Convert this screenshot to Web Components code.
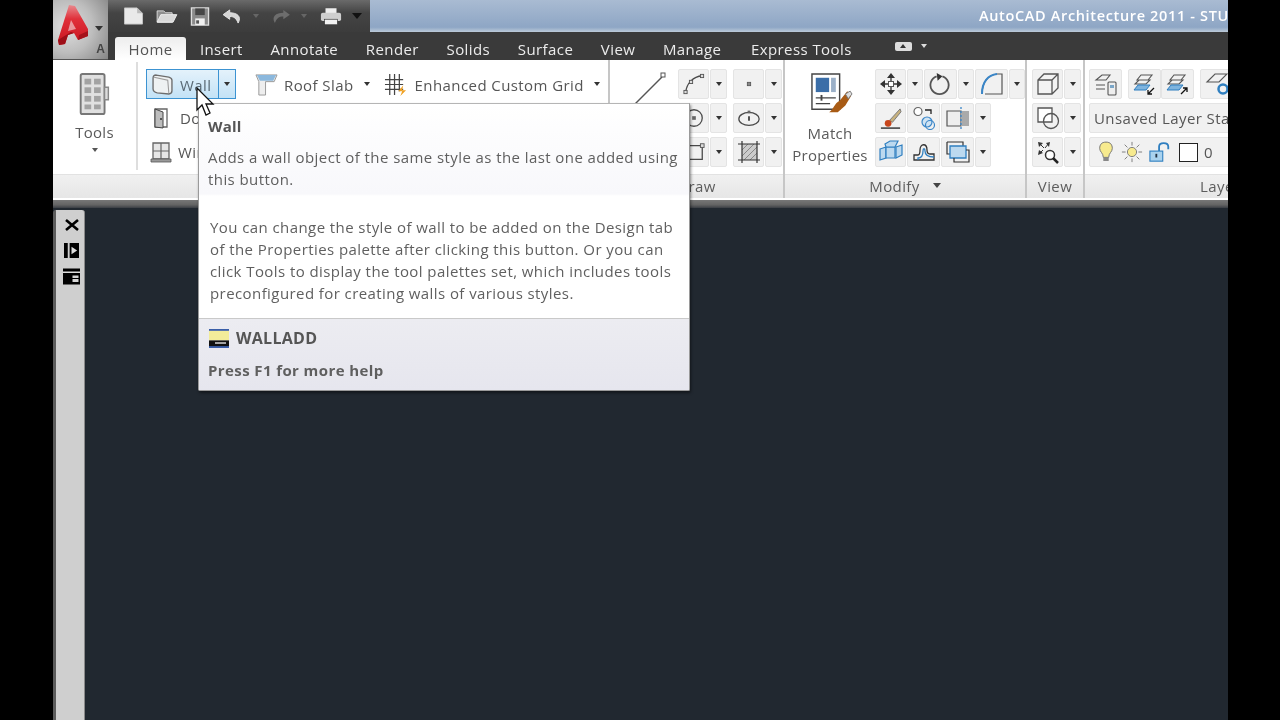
<!DOCTYPE html>
<html><head><meta charset="utf-8">
<style>
html,body{margin:0;height:100%;background:#000;overflow:hidden}
body{display:flex;padding-left:53px;font-family:"Open Sans","Noto Sans",sans-serif}
</style></head><body>
<cad-app></cad-app>
<script>
const S='fill="none" stroke="#4a4a4a" stroke-width="1.4"';
const ICONS={
 app:`<svg viewBox="0 0 36 48"><defs><linearGradient id="ar" x1="0" y1="0" x2="0" y2="1"><stop offset="0" stop-color="#e88a8e"/><stop offset=".35" stop-color="#e0303a"/><stop offset="1" stop-color="#c8141e"/></linearGradient></defs><path d="M12 3 18 4 31 27 31 34 21 38 17 31 11 33 8 42 2 43 1 38Z" fill="url(#ar)"/><path d="M14 18 19 27 11 29Z" fill="#f5f5f5" opacity=".55"/><path d="M1 38 14 30 17 31 11 33 8 42 2 43Z" fill="#9d0f18"/><path d="M21 38 31 34 31 29 22 33Z" fill="#a5121b"/></svg>`,
 new:`<svg viewBox="0 0 22 20"><path d="M1 1H15L21 7V19H1Z" fill="#e9e9e9" stroke="#c4c4c4"/><path d="M15 1V7H21" fill="#bbb"/></svg>`,
 open:`<svg viewBox="0 0 24 16"><path d="M2 2H9L11 4H18V14H2Z" fill="#8d8d8d" stroke="#ddd"/><path d="M6 6H23L19 14H2Z" fill="#d8d8d8" stroke="#eee"/></svg>`,
 save:`<svg viewBox="0 0 20 20"><path d="M1 1H19V19H1Z" fill="#8b8b8b" stroke="#dedede" stroke-width="1.400"/><rect x="5" y="1.500" width="10" height="7" fill="#474747"/><rect x="5" y="12" width="10" height="7" fill="#f0f0f0"/><rect x="6" y="14" width="3" height="3.500" fill="#555"/></svg>`,
 undo:`<svg viewBox="0 0 22 16"><path d="M8 1 1 6 8 11V8C13 8 15 10 17 15 21 8 16 4 8 4Z" fill="#d5d5d5" stroke="#e8e8e8"/></svg>`,
 redo:`<svg viewBox="0 0 22 16"><path d="M14 1 21 6 14 11V8C9 8 7 10 5 15 1 8 6 4 14 4Z" fill="#6d6d6d"/></svg>`,
 print:`<svg viewBox="0 0 24 20"><rect x="6" y="1" width="12" height="7" fill="#eee"/><rect x="1" y="6" width="22" height="9" rx="2" fill="#cfcfcf"/><rect x="5" y="13" width="14" height="6" fill="#f2f2f2" stroke="#333" stroke-width=".7"/></svg>`,
 tools:`<svg viewBox="0 0 32 44"><path d="M3 1H24Q26 1 26 3V41Q26 43 24 43H3Q1 43 1 41V3Q1 1 3 1Z" fill="#e0e0e0" stroke="#777" stroke-width="2"/><path d="M26 15H30V28H26Z" fill="#ddd" stroke="#888" stroke-width="1.500"/><g fill="#a2a2a2"><rect x="5" y="6" width="7" height="6"/><rect x="15" y="6" width="7" height="6"/><rect x="5" y="15" width="7" height="6"/><rect x="15" y="15" width="7" height="6"/><rect x="5" y="24" width="7" height="6"/><rect x="15" y="24" width="7" height="6"/><rect x="5" y="33" width="7" height="5"/><rect x="15" y="33" width="7" height="5"/></g></svg>`,
 wall:`<svg viewBox="0 0 20 20"><path d="M4 1 16 3Q19 4 19 6V16Q19 19 16 19L5 18Q1 17 1 14V4Q1 1 4 1Z" fill="#eef1f2" stroke="#6d6d6d" stroke-width="1.300"/><path d="M2 3 15 6 16 18" fill="none" stroke="#9a9a9a"/></svg>`,
 door:`<svg viewBox="0 0 20 22"><path d="M4 2H16V20H4Z" fill="#fff" stroke="#666" stroke-width="1.300"/><path d="M4 2 12 5V21L4 20Z" fill="#bdbdbd" stroke="#444"/><circle cx="10" cy="12" r="1" fill="#333"/></svg>`,
 window:`<svg viewBox="0 0 22 22"><path d="M3 2H19V18H3Z" fill="#e6e6e6" stroke="#666" stroke-width="1.300"/><path d="M11 2V18M3 10H19" stroke="#666" stroke-width="1.200"/><path d="M1 18H21V21H1Z" fill="#999" stroke="#555" stroke-width=".8"/></svg>`,
 roof:`<svg viewBox="0 0 24 24"><path d="M1 2H23L20 9H11V23H4V9Z" fill="#eee" stroke="#999"/><path d="M2 2H22L19 8H5Z" fill="#8bb8dd"/></svg>`,
 grid:`<svg viewBox="0 0 24 24"><path d="M1 7H20M1 12H20M1 17H20M6 1V23M11 1V23M16 1V19" stroke="#444" stroke-width="1.300"/><path d="M20 13 15 19H19L17 24 23 18H19Z" fill="#f0a020"/></svg>`,
 line:`<svg viewBox="0 0 34 34"><path d="M2 33 29 6" stroke="#555" stroke-width="1.400"/><rect x="28" y="2" width="4" height="4" fill="#fff" stroke="#555"/></svg>`,
 arc:`<svg viewBox="0 0 24 24"><path d="M3 21C4 11 11 4 21 3" ${S}/><g fill="#ddd" stroke="#555"><rect x="1" y="19" width="3.500" height="3.500"/><rect x="7" y="8" width="3.500" height="3.500"/><rect x="19" y="1.500" width="3.500" height="3.500"/></g></svg>`,
 point:`<svg viewBox="0 0 24 24"><rect x="10" y="10" width="4" height="4" fill="#888" stroke="#555"/></svg>`,
 circle:`<svg viewBox="0 0 24 24"><circle cx="12" cy="12" r="9" ${S}/><rect x="10" y="10" width="4" height="4" fill="#666"/></svg>`,
 ellipse:`<svg viewBox="0 0 26 24"><ellipse cx="13" cy="13" rx="11" ry="7" ${S}/><rect x="11.500" y="4" width="3" height="3" fill="#666"/><path d="M13 10V15" stroke="#444" stroke-width="2"/></svg>`,
 rect:`<svg viewBox="0 0 24 24"><path d="M3 5H21V20H3Z" ${S}/><rect x="19" y="3" width="4" height="4" fill="#ddd" stroke="#555"/></svg>`,
 hatch:`<svg viewBox="0 0 24 24"><path d="M5 4H20V20H5Z" fill="#ccc"/><path d="M5 10 11 4M5 16 17 4M7 20 20 7M13 20 20 13" stroke="#888"/><path d="M1 4H23M1 20H23M5 1V23M20 1V23" stroke="#333" stroke-width="1.200"/></svg>`,
 match:`<svg viewBox="0 0 44 44"><path d="M1 1H30V38H1Z" fill="#fff" stroke="#444" stroke-width="1.500"/><rect x="5" y="5" width="14" height="15" fill="#3b6ea8"/><rect x="21" y="5" width="5" height="15" fill="#9bb0c8"/><path d="M5 26H26M5 32H20" stroke="#444" stroke-width="1.300"/><path d="M11 23V29" stroke="#444" stroke-width="2"/><path d="M38 19 42 24 36 34 28 41H19C24 38 24 32 30 29Z" fill="#a85b15"/><path d="M36 22 41 19 43 22 39 27Z" fill="#ddd" stroke="#777"/></svg>`,
 move:`<svg viewBox="0 0 24 24"><path d="M12 1 16 6H8ZM12 23 8 18H16ZM1 12 6 8V16ZM23 12 18 16V8Z" fill="#333"/><rect x="9.500" y="9.500" width="5" height="5" fill="#fff" stroke="#555"/><path d="M6 12H9M15 12H18M12 6V9M12 15V18" stroke="#333" stroke-width="1.300"/></svg>`,
 rotate:`<svg viewBox="0 0 24 24"><path d="M14 3.500A9.500 9.500 0 1 1 8 3.500" fill="none" stroke="#555" stroke-width="1.900"/><path d="M8 0 14 3.500 9 8Z" fill="#333"/></svg>`,
 fillet:`<svg viewBox="0 0 24 24"><path d="M2 22C2 10 8 3 17 2H22V22H5" fill="none" stroke="#555" stroke-width="1.200"/><path d="M2 22C2 10 8 3 17 2" fill="none" stroke="#3a86c8" stroke-width="2"/></svg>`,
 brush:`<svg viewBox="0 0 24 24"><path d="M22 2 11 14 14 16 23 5Z" fill="#c8b27e" stroke="#777"/><circle cx="9.500" cy="17" r="3.500" fill="#c8461c"/><path d="M2 22H22" stroke="#333" stroke-width="1.500"/></svg>`,
 copy:`<svg viewBox="0 0 24 24"><circle cx="6" cy="5.500" r="4" fill="#fff" stroke="#666" stroke-width="1.200"/><circle cx="15" cy="16" r="5" fill="#cfe3f3" stroke="#3a86c8" stroke-width="1.200"/><circle cx="18" cy="19" r="4.500" fill="none" stroke="#3a86c8" stroke-width="1.200"/><path d="M13 4H19V8" fill="none" stroke="#222" stroke-width="1.300"/></svg>`,
 stretch:`<svg viewBox="0 0 24 24"><path d="M1 5H15V20H1Z" fill="#eee" stroke="#555" stroke-width="1.200"/><path d="M15 5H23V20H15Z" fill="#aaa"/><path d="M15 1V24" stroke="#3a86c8" stroke-dasharray="2 2" stroke-width="1.300"/></svg>`,
 array:`<svg viewBox="0 0 24 24"><g fill="#bcd9ef" stroke="#2f7fc0" stroke-width="1.200"><path d="M1 9 7 7V18L1 20Z"/><path d="M7 7H16V18H7Z"/><path d="M17 7 23 5V15L17 18Z"/><path d="M6 4 11 1H19L16 7H7Z"/></g></svg>`,
 offset:`<svg viewBox="0 0 24 24"><path d="M2 20V15H6C8 15 8 13 8 10 8 3 15 3 15 10 15 13 16 14 18 14H22V20Z" fill="none" stroke="#333" stroke-width="1.300"/><path d="M6 20V18C10 18 11 15 11 11 11 8 13 8 13 11 13 15 16 17 22 17" fill="none" stroke="#2f7fc0" stroke-width="1.300"/></svg>`,
 scale:`<svg viewBox="0 0 24 24"><path d="M1 2H17V6M1 2V14H4" fill="none" stroke="#333" stroke-width="1.200"/><path d="M4 6H20V18H4Z" fill="#bcd9ef" stroke="#2f7fc0" stroke-width="1.300"/><path d="M8 18V22H23V10H20" fill="none" stroke="#333" stroke-width="1.200"/></svg>`,
 box:`<svg viewBox="0 0 24 24"><path d="M2 8 8 2H22V16L16 22H2ZM2 8H16V22M16 8 22 2" fill="#f3f3f3" stroke="#555" stroke-width="1.300"/></svg>`,
 cs:`<svg viewBox="0 0 24 24"><path d="M2 2H16V16H2Z" fill="#fff" stroke="#555" stroke-width="1.300"/><circle cx="15" cy="15" r="7.500" fill="none" stroke="#555" stroke-width="1.300"/></svg>`,
 zoom:`<svg viewBox="0 0 24 24"><path d="M2 2 7 3 3 7ZM14 2 10 3 13 7ZM2 15 3 10 7 13Z" fill="#333"/><path d="M3 3 8 8M13 3 9 8M3 14 7 10" stroke="#333"/><circle cx="14" cy="15" r="4.500" fill="#fff" stroke="#333" stroke-width="1.500"/><path d="M17 18 22 23" stroke="#222" stroke-width="2.500"/></svg>`,
 lstate:`<svg viewBox="0 0 24 24"><path d="M2 8 8 3H16L12 8ZM2 13H11M2 17H11" fill="none" stroke="#555" stroke-width="1.100"/><rect x="14" y="10" width="8" height="13" rx="1" fill="#eee" stroke="#555" stroke-width="1.100"/><rect x="16" y="13" width="4" height="3" fill="#7aa6c8"/></svg>`,
 lin:`<svg viewBox="0 0 24 24"><path d="M8 3H19L15 8H4ZM6 8H17L13 12H2Z" fill="none" stroke="#555" stroke-width="1.100"/><path d="M5 13H17L13 18H1Z" fill="#7fb4de" stroke="#2f7fc0"/><path d="M21 16 15 22M15 18V22H19" fill="none" stroke="#111" stroke-width="1.300"/></svg>`,
 lout:`<svg viewBox="0 0 24 24"><path d="M8 3H19L15 8H4ZM6 8H17L13 12H2Z" fill="none" stroke="#555" stroke-width="1.100"/><path d="M5 13H17L13 18H1Z" fill="#7fb4de" stroke="#2f7fc0"/><path d="M15 22 21 16M17 16H21V20" fill="none" stroke="#111" stroke-width="1.300"/></svg>`,
 lgear:`<svg viewBox="0 0 24 24"><path d="M2 10 10 2H22L14 10Z" fill="none" stroke="#555" stroke-width="1.100"/><circle cx="18" cy="17" r="4.500" fill="none" stroke="#2f7fc0" stroke-width="2.500"/></svg>`,
 bulb:`<svg viewBox="0 0 20 24"><path d="M10 1C5 1 3 4 3 8 3 12 7 13 7 18H13C13 13 17 12 17 8 17 4 15 1 10 1Z" fill="#f7ea8e" stroke="#777" stroke-width="1.100"/><rect x="7" y="18" width="6" height="4" fill="#888"/></svg>`,
 sun:`<svg viewBox="0 0 24 24"><circle cx="12" cy="12" r="5" fill="#f7ea8e" stroke="#777"/><path d="M12 1V5M12 19V23M1 12H5M19 12H23M4 4 7 7M17 17 20 20M20 4 17 7M7 17 4 20" stroke="#777"/></svg>`,
 lock:`<svg viewBox="0 0 24 24"><rect x="1" y="11" width="14" height="11" fill="#a9d2ee" stroke="#2f7fc0" stroke-width="1.200"/><path d="M11 11V6C11 1 21 1 21 6V9" fill="none" stroke="#2f7fc0" stroke-width="2"/><rect x="7" y="14" width="2" height="4" fill="#234"/></svg>`,
 cmd:`<svg viewBox="0 0 22 20" preserveAspectRatio="none"><rect x="1" y="0" width="20" height="2" fill="#3a5ea8"/><rect x="1" y="2" width="20" height="10" fill="#f2ec9a"/><rect x="1" y="12" width="20" height="7" fill="#111"/><rect x="7" y="14" width="11" height="1.500" fill="#ddd"/><rect x="1" y="18" width="20" height="2" fill="#3a5ea8"/></svg>`,
 cursor:`<svg viewBox="0 0 20 30"><path d="M1 1V23L6 18 10 28 14 26 10 17H17Z" fill="#fff" stroke="#111" stroke-width="1.300"/></svg>`,
 close:`<svg viewBox="0 0 14 12" preserveAspectRatio="none"><path d="M1 1 13 11M13 1 1 11" stroke="#000" stroke-width="2.600"/></svg>`,
 auto:`<svg viewBox="0 0 16 16"><rect x="0" y="0" width="4" height="16" fill="#000"/><rect x="6" y="0" width="10" height="16" fill="#000"/><path d="M8 4 14 8 8 12Z" fill="#ddd"/></svg>`,
 props:`<svg viewBox="0 0 17 16"><rect x="0" y="0" width="17" height="16" fill="#000"/><rect x="0" y="3" width="17" height="1.500" fill="#ddd"/><path d="M9 6.500H16V14H9ZM9 10H16" fill="#d5d5d5" stroke="#000"/></svg>`
};
function def(name,css,html,init){
 customElements.define(name,class extends HTMLElement{
  constructor(){super();this.attachShadow({mode:'open'}).innerHTML=`<style>${css}</style>${typeof html==='function'?html(this):html}`;}
  connectedCallback(){if(init)init(this);}
 });
}
def('cad-icon',':host{display:inline-flex;flex:none;line-height:0}svg{width:100%;height:100%;display:block}','<span style="display:contents"></span>',el=>{
 el.shadowRoot.querySelector('span').innerHTML=ICONS[el.getAttribute('n')]||'';
 const w=el.getAttribute('w')||22,h=el.getAttribute('h')||w;
 el.style.width=w+'px';el.style.height=h+'px';
});
def('cad-caret',':host{display:inline-block;flex:none;width:0;height:0;border:3.5px solid transparent;border-top:4px solid var(--c,#333);border-bottom:0}','');
def('rb-tile',`:host{display:inline-flex;align-items:center;justify-content:center;flex:none;height:30px;background:#f1f1f1;border:1px solid #e4e4e4;box-sizing:border-box;border-radius:2px}`,'<slot></slot>',el=>{el.style.width=(el.getAttribute('w')||31)+'px'});
def('rb-row',`:host{display:flex;align-items:center;height:30px;gap:var(--g,1px)}`,'<slot></slot>');
def('rb-panel',`:host{display:flex;flex-direction:column;flex:none;box-sizing:border-box;border-right:2px solid #c6c6c6;height:138px}
 .c{flex:none;height:114px;box-sizing:border-box;background:#fff;display:flex;padding-top:9px}
 .f{flex:none;height:24px;background:linear-gradient(#f0f0f0,#e6e6e6);border-top:1px solid #e2e2e2;box-sizing:border-box;display:flex;align-items:center;justify-content:var(--fj,center);gap:13px;color:#5d5d5d;font-size:15px;letter-spacing:.4px;padding:0 0 2px var(--fp,0);white-space:nowrap}`,
 el=>`<div class="c"><slot></slot></div><div class="f">${el.getAttribute('label')||''}${el.hasAttribute('more')?'<cad-caret style="--c:#444;border-width:4.5px;border-top-width:5px;border-bottom:0"></cad-caret>':''}</div>`,
 el=>{el.style.width=el.getAttribute('w')+'px'});
def('rb-tabs',`:host{display:flex;align-items:flex-end;height:28px;background:#3a3a3a;color:#eee;font-size:15px;letter-spacing:.42px;padding-left:7px}`,'<slot></slot>');
def('rb-tab',`:host{display:flex;align-items:center;justify-content:center;height:23px;box-sizing:border-box;padding:1px 13.8px 0;white-space:nowrap;color:#ececec}
 :host([active]){background:linear-gradient(#ededed,#fff);color:#555;border-radius:3px 3px 0 0;padding:1px 13.500px 0}`,'<slot></slot>');
def('qat-bar',`:host{display:flex;align-items:center;height:32px;width:262px;background:linear-gradient(#6a6a6a,#444 40%,#3c3c3c);box-sizing:border-box;padding-left:15px;flex:none}`,'<slot></slot>');
def('build-btn',`:host{display:flex;align-items:center;gap:7px;height:30px;color:#555;font-size:15px;white-space:nowrap;flex:none;letter-spacing:.42px}`,'<slot></slot>');
def('wall-split',`:host{display:flex;height:30px;box-sizing:border-box;border:1.500px solid #3c93d2;background:linear-gradient(#e4f2fb,#c3e2f6);flex:none;width:90px;color:#5a6a75;font-size:15px;letter-spacing:.42px}
 .a{display:flex;align-items:center;gap:7px;padding:1px 0 0 5px;width:72px;box-sizing:border-box;border-right:1.500px solid #3c93d2}
 .b{flex:1;display:flex;align-items:center;justify-content:center}`,
 `<div class="a"><cad-icon n="wall" w="21"></cad-icon><slot></slot></div><div class="b"><cad-caret></cad-caret></div>`);
def('cad-tooltip',`:host{position:absolute;left:145px;top:103px;width:492px;height:288px;box-sizing:border-box;background:#fff;border:1px solid #9a9a9a;border-top-color:#b5b5b5;box-shadow:1px 2px 3px rgba(0,0,0,.45);display:flex;flex-direction:column;color:#5f5f5f;font-size:15px;letter-spacing:.42px;line-height:22.250px;border-radius:0 0 2px 2px}
 .m{flex:1;padding:11px 9px 0 9px;background:linear-gradient(#fff 0,#f8f8fb 90px,#fff 92px,#fff)}
 h3{margin:0 0 8.500px;font-size:15px;font-weight:700;line-height:22px;color:#555;letter-spacing:.2px}
 p{margin:0;white-space:nowrap}
 p+p{margin-top:25.500px;margin-left:2px}
 .f{flex:none;height:72px;box-sizing:border-box;background:linear-gradient(#ececf1,#e6e6ee);border-top:1px solid #c9c9c9;padding:7px 9px 0;font-weight:700}
 .r{display:flex;align-items:center;gap:6px;height:24px;font-size:16px;letter-spacing:.3px;color:#555}
 .h{margin-top:9px;font-size:15px;color:#5f5f5f;line-height:22px;letter-spacing:.4px}`,
 `<div class="m"><h3>Wall</h3><p>Adds a wall object of the same style as the last one added using<br>this button.</p><p>You can change the style of wall to be added on the Design tab<br>of the Properties palette after clicking this button. Or you can<br>click Tools to display the tool palettes set, which includes tools<br>preconfigured for creating walls of various styles.</p></div>
 <div class="f"><div class="r"><cad-icon n="cmd" w="22" h="19"></cad-icon><span>WALLADD</span></div><div class="h">Press F1 for more help</div></div>`);
def('tool-strip',`:host{display:flex;flex-direction:column;align-items:center;width:32px;margin-top:2px;background:#cfcfcf;border-left:3px solid #5c5c5c;border-right:1px solid #8a8a8a;padding-top:9px;box-sizing:border-box;border-radius:3px 3px 0 0}`,'<slot></slot>');
def('cad-app',`:host{display:block;position:relative;width:1175px;height:720px;overflow:hidden;background:#212830;filter:blur(.35px)}
 .top{display:grid;grid-template-columns:55px 1fr;grid-template-rows:32px 28px}
 .appb{grid-row:1/3;background:radial-gradient(circle at 25% 45%,#e0e0e0,#bdbdbd 50%,#858585 100%);position:relative;display:flex;padding:2px 0 0 4px;box-sizing:border-box;overflow:hidden;border-bottom:1px solid #555}
 .appb b{position:absolute;right:3px;bottom:3px;font:700 12px "Liberation Sans",sans-serif;color:#444}
 .appb cad-caret{position:absolute;right:5px;top:26px;--c:#333;border-width:4.500px;border-top-width:5px}
 .title{flex:1;display:flex;align-items:center;white-space:nowrap;overflow:hidden;background:linear-gradient(#a9bbd2,#8ea6c5 85%,#bccad9);color:#fff;font-size:14.500px;font-weight:600;letter-spacing:.65px;padding:0 0 1px 609px}
 .tr{display:flex}
 .rib{display:flex;height:138px;background:#fff;overflow:hidden}
 .gap{height:2px;background:#fff}
 .sep{height:8px;background:linear-gradient(#777,#646464 60%,#3a3e44)}
 .canvas{height:512px;background:#212830;display:flex}
 .col{display:flex;flex-direction:column;align-items:flex-start;gap:4px}
 .big{display:flex;flex-direction:column;align-items:center;color:#5a5a5a;font-size:15px;letter-spacing:.3px;line-height:22.500px;text-align:center;white-space:nowrap}
 .div{width:2px;height:108px;background:#dedede;flex:none;margin-top:-7px}
 .cur{position:absolute;left:143px;top:87px;z-index:5}`,
 `<div class="top">
  <div class="appb"><cad-icon n="app" w="36" h="48"></cad-icon><cad-caret></cad-caret><b>A</b></div>
  <div class="tr"><qat-bar>
    <cad-icon n="new" w="21" h="18" style="margin-right:11px"></cad-icon><cad-icon n="open" w="23" h="15" style="margin-right:12px"></cad-icon><cad-icon n="save" w="20" h="19" style="margin-right:12px"></cad-icon><cad-icon n="undo" w="21" h="15" style="margin-right:10px"></cad-icon><cad-caret style="--c:#666;margin-right:11px"></cad-caret><cad-icon n="redo" w="21" h="15" style="margin-right:10px"></cad-icon><cad-caret style="--c:#666;margin-right:13px"></cad-caret><cad-icon n="print" w="22" h="19" style="margin-right:10px"></cad-icon><cad-caret style="--c:#111;border-width:5px;border-top-width:6px"></cad-caret>
  </qat-bar><div class="title"><span>AutoCAD Architecture 2011 - STU</span></div></div>
  <rb-tabs><rb-tab active>Home</rb-tab><rb-tab>Insert</rb-tab><rb-tab>Annotate</rb-tab><rb-tab>Render</rb-tab><rb-tab>Solids</rb-tab><rb-tab>Surface</rb-tab><rb-tab>View</rb-tab><rb-tab>Manage</rb-tab><rb-tab style="margin-left:2px">Express Tools</rb-tab>
   <span style="display:flex;align-items:center;gap:9px;height:28px;margin-left:29px"><span style="width:17px;height:9px;background:#ddd;border-radius:2px;display:flex;align-items:center;justify-content:center"><span style="display:block;width:0;height:0;border:3.500px solid transparent;border-bottom:4px solid #333;border-top:0"></span></span><cad-caret style="--c:#ddd"></cad-caret></span></rb-tabs>
 </div>
 <div class="rib">
  <rb-panel w="557" label="">
   <div class="big" style="width:83px;padding-top:4px"><cad-icon n="tools" w="32" h="42"></cad-icon><span style="margin-top:6px">Tools</span><cad-caret style="margin-top:4px;--c:#555"></cad-caret></div>
   <div class="div"></div>
   <div class="col" style="padding-left:8px">
    <div style="display:flex;align-items:center;height:30px">
     <wall-split>Wall</wall-split>
     <build-btn style="margin-left:19px;gap:6px;padding-top:2px"><cad-icon n="roof" w="23" style="margin-top:-2px"></cad-icon><span>Roof Slab</span><cad-caret style="margin:-2px 0 0 4px"></cad-caret></build-btn>
     <build-btn style="margin-left:14px;gap:8px;padding-top:2px"><cad-icon n="grid" w="23" style="margin-top:-2px"></cad-icon><span>Enhanced Custom Grid</span><cad-caret style="margin:-2px 0 0 2px"></cad-caret></build-btn>
    </div>
    <build-btn style="padding-left:4px;gap:8px"><cad-icon n="door" w="22"></cad-icon><span>Door</span></build-btn>
    <build-btn style="padding-left:4px;gap:6px"><cad-icon n="window" w="22"></cad-icon><span>Window</span></build-btn>
   </div>
  </rb-panel>
  <rb-panel w="175" label="Draw">
   <div style="display:flex;gap:6px;padding-left:23px">
    <cad-icon n="line" w="34" style="margin-top:2px"></cad-icon>
    <div class="col" style="margin-left:5px">
     <rb-row><rb-tile><cad-icon n="arc" w="22"></cad-icon></rb-tile><rb-tile w="17"><cad-caret></cad-caret></rb-tile></rb-row>
     <rb-row><rb-tile><cad-icon n="circle" w="22"></cad-icon></rb-tile><rb-tile w="17"><cad-caret></cad-caret></rb-tile></rb-row>
     <rb-row><rb-tile><cad-icon n="rect" w="22"></cad-icon></rb-tile><rb-tile w="17"><cad-caret></cad-caret></rb-tile></rb-row>
    </div>
    <div class="col">
     <rb-row><rb-tile><cad-icon n="point" w="20"></cad-icon></rb-tile><rb-tile w="17"><cad-caret></cad-caret></rb-tile></rb-row>
     <rb-row><rb-tile><cad-icon n="ellipse" w="24"></cad-icon></rb-tile><rb-tile w="17"><cad-caret></cad-caret></rb-tile></rb-row>
     <rb-row><rb-tile><cad-icon n="hatch" w="24"></cad-icon></rb-tile><rb-tile w="17"><cad-caret></cad-caret></rb-tile></rb-row>
    </div>
   </div>
  </rb-panel>
  <rb-panel w="242" label="Modify" more>
   <div class="big" style="width:90px;padding-top:4px"><cad-icon n="match" w="42" h="42" style="margin-left:3px"></cad-icon><span style="margin-top:6.500px">Match<br>Properties</span></div>
   <div class="col">
    <rb-row><rb-tile><cad-icon n="move" w="24"></cad-icon></rb-tile><rb-tile w="16"><cad-caret></cad-caret></rb-tile><rb-tile w="33"><cad-icon n="rotate" w="23"></cad-icon></rb-tile><rb-tile w="16"><cad-caret></cad-caret></rb-tile><rb-tile w="33"><cad-icon n="fillet" w="24"></cad-icon></rb-tile><rb-tile w="16"><cad-caret></cad-caret></rb-tile></rb-row>
    <rb-row><rb-tile><cad-icon n="brush" w="23"></cad-icon></rb-tile><rb-tile w="33"><cad-icon n="copy" w="24"></cad-icon></rb-tile><rb-tile w="33"><cad-icon n="stretch" w="24"></cad-icon></rb-tile><rb-tile w="16"><cad-caret></cad-caret></rb-tile></rb-row>
    <rb-row><rb-tile><cad-icon n="array" w="24"></cad-icon></rb-tile><rb-tile w="33"><cad-icon n="offset" w="24"></cad-icon></rb-tile><rb-tile w="33"><cad-icon n="scale" w="24"></cad-icon></rb-tile><rb-tile w="16"><cad-caret></cad-caret></rb-tile></rb-row>
   </div>
  </rb-panel>
  <rb-panel w="58" label="View">
   <div class="col" style="padding-left:5px">
    <rb-row><rb-tile><cad-icon n="box" w="24"></cad-icon></rb-tile><rb-tile w="17"><cad-caret></cad-caret></rb-tile></rb-row>
    <rb-row><rb-tile><cad-icon n="cs" w="24"></cad-icon></rb-tile><rb-tile w="17"><cad-caret></cad-caret></rb-tile></rb-row>
    <rb-row><rb-tile><cad-icon n="zoom" w="24"></cad-icon></rb-tile><rb-tile w="17"><cad-caret></cad-caret></rb-tile></rb-row>
   </div>
  </rb-panel>
  <rb-panel w="240" label="Layers" style="--fj:flex-start;--fp:115px;border-right:0">
   <div class="col" style="padding-left:4px">
    <rb-row style="--g:0px"><rb-tile w="33"><cad-icon n="lstate" w="24"></cad-icon></rb-tile><rb-tile w="33" style="margin-left:6px"><cad-icon n="lin" w="24"></cad-icon></rb-tile><rb-tile w="33"><cad-icon n="lout" w="24"></cad-icon></rb-tile><rb-tile w="33" style="margin-left:6px"><cad-icon n="lgear" w="24"></cad-icon></rb-tile></rb-row>
    <rb-row><rb-tile w="200" style="justify-content:flex-start;padding-left:4px;color:#555;font-size:15px;letter-spacing:.42px;white-space:nowrap">Unsaved Layer State</rb-tile></rb-row>
    <rb-row><rb-tile w="200" style="justify-content:flex-start;padding-left:7px;gap:6px;color:#555;font-size:15px"><cad-icon n="bulb" w="18" h="22"></cad-icon><cad-icon n="sun" w="22"></cad-icon><cad-icon n="lock" w="22"></cad-icon><span style="display:block;width:17px;height:17px;background:#fff;border:1.500px solid #222;margin-left:2px"></span><span>0</span></rb-tile></rb-row>
   </div>
  </rb-panel>
 </div>
 <div class="gap"></div><div class="sep"></div>
 <div class="canvas"><tool-strip><cad-icon n="close" w="14" h="12" style="margin-left:3px"></cad-icon><cad-icon n="auto" w="15" style="margin:12px 0 0 2px"></cad-icon><cad-icon n="props" w="17" style="margin:10px 0 0 2px"></cad-icon></tool-strip></div>
 <cad-tooltip></cad-tooltip>
 <cad-icon class="cur" n="cursor" w="20" h="30"></cad-icon>`);
</script>
</body></html>
